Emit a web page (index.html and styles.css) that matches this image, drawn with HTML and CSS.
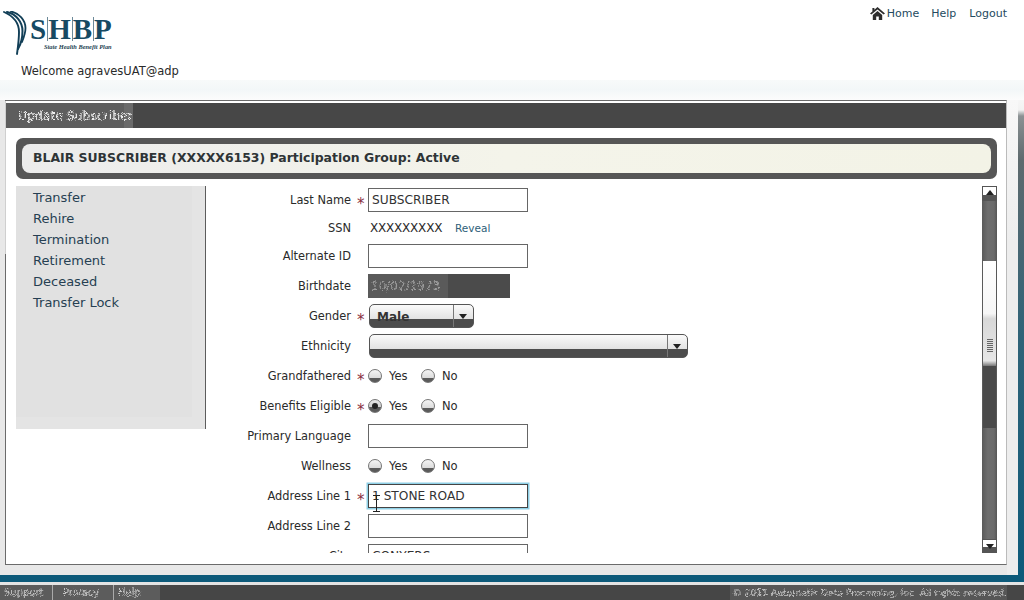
FILE: index.html
```html
<!DOCTYPE html>
<html lang="en">
<head>
<meta charset="utf-8">
<title>Update Subscriber</title>
<link rel="stylesheet" href="styles.css">
</head>
<body>
<svg class="defs" width="0" height="0">
  <filter id="speckle" x="-5%" y="-20%" width="110%" height="140%">
    <feTurbulence type="fractalNoise" baseFrequency="0.85" numOctaves="2" seed="4" result="n"/>
    <feDisplacementMap in="SourceGraphic" in2="n" scale="4" xChannelSelector="R" yChannelSelector="G"/>
  </filter>
</svg>
<header class="top">
  <div class="top-row">
    <div class="logo">
      <svg class="swoosh" width="26" height="44" viewBox="0 0 26 44">
        <g fill="none" stroke="#123f57" stroke-linecap="round">
          <path d="M1 1 C10 5 16 12 16 21 C16 29 15 36 14 43" stroke-width="1.900"/>
          <path d="M4 1 C13 3 19.500 11 19.500 20 C19.500 27 18 33 15 38" stroke-width="2"/>
          <path d="M8 .5 C16 2 22.500 9 22.500 17 C22.500 22 21 26 19 31" stroke-width="1.800"/>
        </g>
      </svg>
      <div class="logo-text">
        <div class="logo-word"><span>S</span><span>H</span><span>B</span><span>P</span></div>
        <div class="logo-sub">State Health Benefit Plan</div>
      </div>
    </div>
    <nav class="nav">
      <a class="nav-home">
        <svg width="15" height="13" viewBox="0 0 15 13"><path fill="#2c2c2c" d="M7.500 0 L15 6.600 L13.600 7.600 L7.500 2.400 L1.400 7.600 L0 6.600 L2.400 4.500 L2.400 1 L4.400 1 L4.400 2.700 Z M2.800 8 L7.500 4 L12.200 8 L12.200 13 L8.800 13 L8.800 9.400 L6.200 9.400 L6.200 13 L2.800 13 Z"/></svg>
        Home
      </a>
      <a>Help</a>
      <a>Logout</a>
    </nav>
  </div>
  <div class="welcome">Welcome agravesUAT@adp</div>
</header>
<div class="band"></div>
<main class="stage">
  <section class="panel">
    <div class="titlebar"><div class="title-patch"><span>Update Subscriber</span></div></div>
    <div class="card"><div class="card-inner">BLAIR SUBSCRIBER (XXXXX6153) Participation Group: Active</div></div>
    <div class="content">
      <aside class="side">
        <a>Transfer</a>
        <a>Rehire</a>
        <a>Termination</a>
        <a>Retirement</a>
        <a>Deceased</a>
        <a>Transfer Lock</a>
      </aside>
      <form class="form">
        <div class="row first"><label>Last Name</label><span class="req">*</span><input class="field" value="SUBSCRIBER"></div>
        <div class="row second"><label>SSN</label><span class="req"></span><span class="ssn">XXXXXXXXX</span><a class="reveal">Reveal</a></div>
        <div class="row"><label>Alternate ID</label><span class="req"></span><input class="field"></div>
        <div class="row"><label>Birthdate</label><span class="req"></span><div class="dark-field"><div class="dark-text"><span>10/02/1973</span></div></div></div>
        <div class="row"><label>Gender</label><span class="req">*</span><div class="select short"><span>Male</span><i class="caret"></i></div></div>
        <div class="row"><label>Ethnicity</label><span class="req"></span><div class="select wide"><span></span><i class="caret"></i></div></div>
        <div class="row"><label>Grandfathered</label><span class="req">*</span><i class="radio"></i><span class="opt">Yes</span><i class="radio"></i><span class="opt">No</span></div>
        <div class="row"><label>Benefits Eligible</label><span class="req">*</span><i class="radio on"></i><span class="opt">Yes</span><i class="radio"></i><span class="opt">No</span></div>
        <div class="row"><label>Primary Language</label><span class="req"></span><input class="field"></div>
        <div class="row"><label>Wellness</label><span class="req"></span><i class="radio"></i><span class="opt">Yes</span><i class="radio"></i><span class="opt">No</span></div>
        <div class="row"><label>Address Line 1</label><span class="req">*</span><span class="focus-wrap"><input class="field focus" value="1 STONE ROAD"><svg class="ibeam" width="9" height="17" viewBox="0 0 9 17"><path fill="none" stroke="#222" d="M1 .5 H8 M4.500 .5 V16.500 M1 16.500 H8"/></svg></span></div>
        <div class="row"><label>Address Line 2</label><span class="req"></span><input class="field"></div>
        <div class="row"><label>City</label><span class="req"></span><input class="field" value="CONYERS"></div>
      </form>
      <div class="scroll">
        <div class="sb-btn"><i class="up"></i></div>
        <div class="sb-track">
          <div class="sb-thumb"><div class="grip"></div></div>
          <div class="sb-dark"></div>
        </div>
        <div class="sb-btn sb-down"><i class="down"></i></div>
      </div>
    </div>
  </section>
  <div class="gutter"></div>
</main>
<div class="blue"></div>
<footer class="foot">
  <div class="foot-left"><a><span>Support</span></a><a><span>Privacy</span></a><a><span>Help</span></a></div>
  <div class="foot-right"><span>© 2011 Automatic Data Processing, Inc. All rights reserved.</span></div>
</footer>
</body>
</html>
```
FILE: styles.css
```css
* { box-sizing: border-box; }
html, body { margin: 0; height: 600px; overflow: hidden; }
body {
  width: 1024px;
  display: flex;
  flex-direction: column;
  background: #e4e4e4;
  font: 11.400px "DejaVu Sans", Verdana, sans-serif;
  color: #2a2a2a;
}
.defs { position: absolute; }
.top { height: 80px; flex: none; background: #fff; }
.top-row { display: flex; justify-content: space-between; height: 64px; }
.logo { display: flex; padding: 11px 0 0 3px; }
.logo-text { margin-left: 1px; padding-top: 6px; }
.logo-word {
  display: flex;
  height: 24px;
  font: bold 29px/24px "Liberation Serif", serif;
  color: #174a63;
}
.logo-word span + span { border-left: 1px solid #6d8a99; margin-left: 1px; }
.logo-sub {
  font: italic bold 6.400px/7px "Liberation Serif", serif;
  color: #1c3f52;
  margin: 2px 0 0 14px;
  white-space: nowrap;
}
.nav { display: flex; gap: 13px; padding: 7px 17px 0 0; font-size: 11px; line-height: 13px; color: #244a60; }
.nav-home { display: flex; align-items: center; gap: 2px; height: 13px; margin-right: -1px; }
.welcome { padding-left: 21px; line-height: 14px; font-size: 11.500px; }
.band { height: 20px; flex: none; background: linear-gradient(#f8fafa, #f3f7f8 50%, #fcfcfc); }

.stage { height: 475px; flex: none; display: flex; padding-left: 5px; background: #e8e8e8; }
.panel {
  width: 1002px;
  height: 465px;
  background: linear-gradient(#cfcfcf 0 153px, #6b6b6b 153px) left top / 1px 100% no-repeat, #fff;
  border: 1px solid #6b6b6b;
  border-left: 0;
  border-right-color: #bbb;
  padding: 2px 0 0 1px;
}
.gutter { flex: 1; background:
  linear-gradient(#f6f6f6 0, #f2f2f2 10px, #8b9193 16px, #5e6a6e 60px, #2f6378 50%, #0d5a7a) right top / 6px 100% no-repeat,
  linear-gradient(#f8f8f8, #ededed 30%); }

.titlebar { height: 25px; background: #474747; display: flex; }
.title-patch {
  width: 127px;
  padding-left: 12px;
  line-height: 25px;
  font-size: 12.400px;
  color: #efefef;
  background: linear-gradient(90deg, #5e5e5e 0, #5e5e5e 118px, #6a6a6a 118px);
  white-space: nowrap;
  overflow: hidden;
}
.title-patch span, .dark-text span, .foot span { display: block; }
.title-patch span { filter: url(#speckle); }
.card {
  margin: 10px 9px 0 10px;
  height: 41px;
  background: #565656;
  border-radius: 7px;
  padding: 6px;
}
.card-inner {
  height: 29px;
  border-radius: 8px;
  background: linear-gradient(90deg, #ececec, #f4f4ea 50%, #f3f3e6);
  padding-left: 11px;
  font-size: 12.450px;
  font-weight: bold;
  line-height: 28px;
  color: #2e3436;
  white-space: nowrap;
}
.content { display: flex; margin: 7px 9px 0 10px; height: 367px; }
.side {
  flex: none;
  width: 190px;
  height: 243px;
  background: #e1e1e1;
  border-right: 1px solid #5c5c5c;
  box-shadow: inset 0 -12px #e4e4e4, inset -13px 0 #e4e4e4;
  padding: 1px 0 0 17px;
  display: flex;
  flex-direction: column;
  font-size: 13px;
  line-height: 21px;
  color: #263f52;
}
.form { flex: 1; height: 367px; overflow: hidden; }
.row { display: flex; align-items: center; height: 30px; }
.row.first { height: 28px; }
.row.second { height: 27px; }
.row label { flex: none; width: 145px; text-align: right; line-height: 14px; white-space: nowrap; }
.req {
  flex: none;
  width: 17px;
  padding: 8px 0 0 6px;
  color: #8a3040;
  font-size: 15px;
  line-height: 14px;
}
.field {
  width: 160px;
  height: 24px;
  padding: 0 3px;
  border: 1px solid #666;
  border-radius: 0;
  background: #fff;
  font: 12.200px "DejaVu Sans", sans-serif;
  color: #333;
  outline: 0;
}
.focus { border-color: #444; box-shadow: 0 0 0 1.500px #8fd0e6; }
.focus-wrap { position: relative; display: flex; }
.ibeam { position: absolute; left: 4px; top: 11px; }
.ssn { width: 87px; padding-left: 2px; font-size: 12px; letter-spacing: -.2px; }
.reveal { font-size: 10.500px; color: #2f5f7a; }
.dark-field { width: 142px; height: 24px; background: #4b4b4b; display: flex; }
.dark-text { background: #5a5a5a; color: #9c9c9c; width: 80px; padding-left: 3px; line-height: 24px; font-size: 12px; overflow: hidden; }
.dark-text span { filter: url(#speckle); }
.select {
  height: 24px;
  margin-left: 1px;
  border: 1px solid #555;
  border-radius: 5px;
  background: linear-gradient(#fafafa 0, #e2e2e2 64%, #4c4c4c 64%, #4c4c4c 100%);
  display: flex;
  justify-content: space-between;
  align-items: center;
  font-size: 12px;
  font-weight: bold;
  color: #333;
  overflow: hidden;
}
.select.short { width: 105px; }
.select.wide { width: 319px; }
.select span { padding: 1px 0 0 7px; line-height: 22px; }
.caret {
  flex: none;
  width: 20px;
  height: 22px;
  border-left: 1px solid #777;
  position: relative;
}
.caret::after {
  content: "";
  position: absolute;
  left: 5px;
  top: 9px;
  border: 4px solid transparent;
  border-top: 5px solid #222;
  border-bottom: 0;
}
.radio {
  flex: none;
  width: 14px;
  height: 14px;
  border: 1px solid #777;
  border-radius: 50%;
  background: linear-gradient(#f4f4f4 0, #dcdcdc 66%, #5a5a5a 66%);
  position: relative;
}
.radio.on { background: linear-gradient(#e6e6e6 0, #cfcfcf 60%, #5a5a5a 60%); }
.radio.on::after {
  content: "";
  position: absolute;
  left: 3px;
  top: 3px;
  width: 6px;
  height: 6px;
  border-radius: 50%;
  background: #222;
}
.opt { width: 39px; padding-left: 7px; font-size: 11.500px; }
.row .opt:last-child { width: auto; }

.scroll {
  flex: none;
  width: 15px;
  height: 367px;
  display: flex;
  flex-direction: column;
}
.sb-btn {
  flex: none;
  height: 15px;
  border: 1px solid #555;
  background: linear-gradient(#fff 60%, #555 60%);
  display: flex;
  justify-content: center;
  padding-top: 3px;
}
.sb-down { height: 14px; padding-top: 4px; }
.up { width: 0; height: 0; border: 4px solid transparent; border-bottom: 5px solid #222; border-top: 0; }
.down { width: 0; height: 0; border: 4px solid transparent; border-top: 5px solid #222; border-bottom: 0; }
.sb-track {
  flex: 1;
  padding-top: 60px;
  background: linear-gradient(90deg, #5a5a5a, #6e6e6e 40%, #6a6a6a 80%, #555);
}
.sb-thumb {
  height: 105px;
  margin: 0 1px;
  background: linear-gradient(#fff, #f6f6f6 50%, #d8d8d8 55%, #e6e6e6 95%, #777);
  display: flex;
  align-items: center;
  justify-content: center;
  padding-top: 64px;
}
.grip {
  width: 6px;
  height: 13px;
  background: repeating-linear-gradient(#666 0 1px, transparent 1px 2px);
}
.sb-dark { height: 62px; margin: 0 1px; background: #4a4a4a; }

.blue { height: 7px; flex: none; background: #0d5a7a; }
.foot {
  margin-top: 3px;
  flex: 1;
  background: #464646;
  display: flex;
  justify-content: space-between;
  font-size: 10px;
  line-height: 15px;
  color: #c4c4c4;
  overflow: hidden;
}
.foot-left { display: flex; background: #5c5c5c; }
.foot-left a { width: 53px; padding-left: 4px; border-right: 1px solid #aaa; white-space: nowrap; }
.foot-left a:nth-child(2) { width: 61px; padding-left: 10px; }
.foot-left a:last-child { border: 0; width: 46px; }
.foot span { filter: url(#speckle); }
.foot-right { margin-right: 17px; white-space: nowrap; font-size: 9.200px; background: #575757; padding-left: 2px; }
```
